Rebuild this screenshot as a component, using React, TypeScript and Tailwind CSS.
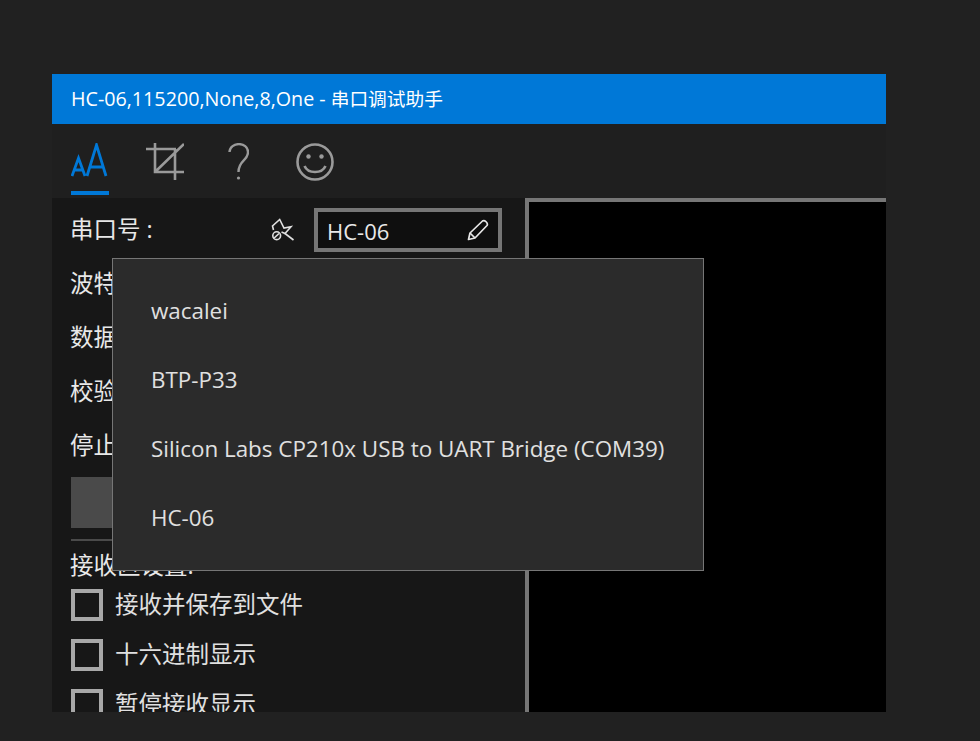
const font = { fontFamily: '"Open Sans", "Noto Sans CJK SC", sans-serif' };

const ports = ['wacalei', 'BTP-P33', 'Silicon Labs CP210x USB to UART Bridge (COM39)', 'HC-06'];

function FontTab() {
  return (
    <div className="flex w-[38px] flex-col">
      <svg width="38" height="38" viewBox="0 0 38 38" fill="none" stroke="#0078d7" strokeWidth="2.8">
        <path d="M1 33 L7.5 15 L14 33 M3.5 27 H11.5" />
        <path d="M16 33 L25.5 2 L35 33 M18.5 24 H32.5" />
      </svg>
      <div className="mt-[10px] h-[4px] w-full bg-[#0078d7]" />
    </div>
  );
}

function CropIcon() {
  return (
    <svg width="38" height="38" viewBox="0 0 38 38" fill="none" stroke="#9a9a9a" strokeWidth="2.6">
      <path d="M0 6 H30 M9 0 V29 H38 M29 6 V37 M9 29 L38 1" />
    </svg>
  );
}

function HelpIcon() {
  return (
    <svg width="21" height="38" viewBox="0 0 21 38" fill="none" stroke="#9a9a9a" strokeWidth="2.4">
      <path d="M1.5 9 C2 -1.5 20 -1.5 20 9 C20 18 10.5 17 10.5 29" />
      <circle cx="10.5" cy="35" r="1.6" fill="#9a9a9a" stroke="none" />
    </svg>
  );
}

function SmileIcon() {
  return (
    <svg width="38" height="38" viewBox="0 0 38 38" fill="none" stroke="#9a9a9a" strokeWidth="2.6">
      <circle cx="19" cy="19" r="17.5" />
      <circle cx="12.5" cy="13.5" r="2.2" fill="#9a9a9a" stroke="none" />
      <circle cx="25.5" cy="13.5" r="2.2" fill="#9a9a9a" stroke="none" />
      <path d="M8.5 23 C12 31 26 31 29.5 23" />
    </svg>
  );
}

function PinOffIcon() {
  return (
    <svg width="24" height="24" viewBox="0 0 24 24" fill="none" stroke="#e0e0e0" strokeWidth="1.6">
      <path d="M2.5 12 L1.5 8 L8.7 1.5 L13 10 L20 8.7 L14 15.5 L10.5 14" />
      <path d="M14 15.5 L22.5 22" />
      <circle cx="5.7" cy="17.7" r="3.9" />
      <path d="M3.2 20 L8 15.5" />
    </svg>
  );
}

function EditIcon() {
  return (
    <svg width="22" height="22" viewBox="0 0 22 22" fill="none" stroke="#e8e8e8" strokeWidth="1.7" strokeLinejoin="round">
      <path d="M1.5 20.5 L3 14 L15.5 2 C17.5 0.5 21.5 4 20 6.5 L8 19 Z" />
      <path d="M3 14 L8 19" />
    </svg>
  );
}

function Check({ label }: { label: string }) {
  return (
    <div className="flex h-[32px] shrink-0 items-center gap-[12px]">
      <div className="h-[32px] w-[32px] border-[4px] border-[#a8a8a8]" />
      <span className="pb-[2px] text-[23.5px] leading-[32px] text-[#e0e0e0]">{label}</span>
    </div>
  );
}

export default function App() {
  return (
    <div className="h-[741px] w-[980px] overflow-hidden bg-[#212121] pl-[52px] pt-[74px]" style={font}>
      <div className="relative flex h-[638px] w-[834px] flex-col overflow-hidden bg-[#171717]">
        <div className="flex h-[50px] shrink-0 items-center bg-[#0078d7] pl-[19px] text-[19.7px] text-white">
          <span>HC-06,115200,None,8,One -&nbsp;</span>
          <span className="text-[18.7px]">串口调试助手</span>
        </div>
        <div className="flex h-[74px] shrink-0 items-start bg-[#1f1f1f] pl-[19px] pt-[19px]">
          <FontTab />
          <div className="ml-[37px]"><CropIcon /></div>
          <div className="ml-[44px]"><HelpIcon /></div>
          <div className="ml-[47px]"><SmileIcon /></div>
        </div>
        <div className="flex min-h-0 flex-1">
          <div className="flex w-[469px] shrink-0 flex-col pl-[19px] text-[23.5px] text-[#e8e8e8]">
            <div className="mb-[5px] mt-[10px] flex h-[44px] shrink-0 items-center">
              <span className="-ml-px w-[201px]">串口号 :</span>
              <div className="flex w-[43px] justify-start"><PinOffIcon /></div>
              <div className="flex h-[44px] w-[188px] items-center justify-between border-[4px] border-[#767676] bg-[#0f0f0f] pl-[9px] pr-[9px]">
                <span className="pt-[2px] text-[22px]">HC-06</span>
                <EditIcon />
              </div>
            </div>
            <div className="-ml-px flex h-[54px] shrink-0 items-center">波特率：</div>
            <div className="-ml-px flex h-[54px] shrink-0 items-center">数据位：</div>
            <div className="-ml-px flex h-[54px] shrink-0 items-center">校验位：</div>
            <div className="-ml-px flex h-[54px] shrink-0 items-center">停止位：</div>
            <div className="mt-[4px] h-[51px] w-[430px] shrink-0 bg-[#4a4a4a]" />
            <div className="mt-[11px] h-[2px] w-[430px] shrink-0 bg-[#4a4a4a]" />
            <div className="-ml-px h-[40px] shrink-0 leading-[48px]">接收区设置:</div>
            <div className="mt-[8px] flex flex-col gap-[18px]">
              <Check label="接收并保存到文件" />
              <Check label="十六进制显示" />
              <Check label="暂停接收显示" />
            </div>
          </div>
          <div className="ml-[4px] flex-1 border-l-[4px] border-t-[4px] border-[#767676] bg-black" />
        </div>
        <div className="absolute left-[60px] top-[184px] flex h-[313px] w-[592px] flex-col justify-center border border-[#767676] bg-[#2b2b2b] text-[22.4px] text-[#e0e0e0]">
          {ports.map(port => (
            <div key={port} className="flex h-[69px] items-center pl-[38px]">{port}</div>
          ))}
        </div>
      </div>
    </div>
  );
}
